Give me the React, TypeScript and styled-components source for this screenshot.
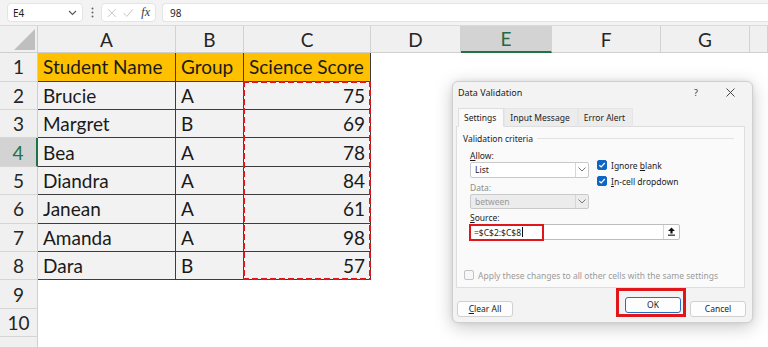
import React from "react";
import styled, { createGlobalStyle } from "styled-components";

const GlobalStyle = createGlobalStyle`
  html, body {
    margin: 0;
    padding: 0;
    background: #fff;
  }
  * {
    box-sizing: border-box;
  }
`;

const UI_FONT = `"Noto Sans", "Open Sans", sans-serif`;
const SHEET_FONT = `Lato, "Noto Sans", sans-serif`;
const RED = "#e0161b";

const Page = styled.div`
  position: relative;
  width: 768px;
  height: 347px;
  overflow: hidden;
  background: #fff;
  font-family: ${SHEET_FONT};
`;

const FormulaBar = styled.div`
  display: flex;
  align-items: center;
  height: 26px;
  padding-left: 7px;
  background: #f3f3f3;
  border-bottom: 1px solid #dadada;
  font-family: ${UI_FONT};
  font-size: 10px;
  color: #222;
`;

const NameBox = styled.div`
  display: flex;
  align-items: center;
  justify-content: space-between;
  width: 76px;
  height: 19px;
  padding: 0 5px 0 5px;
  background: #fff;
  border: 1px solid #e4e4e4;
  border-radius: 4px;
`;

const Dots = styled.div`
  width: 18px;
  display: flex;
  justify-content: center;
`;

const FxBox = styled.div`
  display: flex;
  align-items: center;
  gap: 6px;
  width: 55px;
  height: 19px;
  padding: 0 5px;
  background: #fff;
  border: 1px solid #e4e4e4;
  border-radius: 4px;
`;

const Fx = styled.span`
  font-family: "Liberation Serif", serif;
  font-style: italic;
  font-size: 12px;
  color: #333;
  margin-left: 2px;
`;

const FormulaInput = styled.div`
  flex: 1;
  height: 19px;
  margin-left: 6px;
  padding-left: 7px;
  display: flex;
  align-items: center;
  background: #fff;
  border: 1px solid #e4e4e4;
  border-right: none;
  border-radius: 4px 0 0 4px;
`;

const Sheet = styled.div`
  display: grid;
  grid-template-columns: 38px 138px 68px 127px 90px 91px 109px 89px 1fr;
  grid-template-rows: 27.3px repeat(11, 28.4px);
  font-size: 19px;
`;

const Corner = styled.div`
  grid-row: 1;
  grid-column: 1;
  background: #f0f0f0;
  border-right: 1px solid #cfcfcf;
  border-bottom: 1px solid #cfcfcf;
  display: flex;
  align-items: flex-end;
  justify-content: flex-end;
  padding: 0 2px 2px 0;
`;

const ColHead = styled.div<{ $c: number; $sel?: boolean }>`
  grid-row: 1;
  grid-column: ${(p) => p.$c};
  display: flex;
  align-items: center;
  justify-content: center;
  background: ${(p) => (p.$sel ? "#d3d3d3" : "#f0f0f0")};
  color: ${(p) => (p.$sel ? "#1e6b45" : "#262626")};
  border-right: 1px solid #d2d2d2;
  border-bottom: ${(p) => (p.$sel ? "2px solid #217346" : "1px solid #cfcfcf")};
`;

const RowHead = styled.div<{ $r: number; $sel?: boolean }>`
  grid-row: ${(p) => p.$r};
  grid-column: 1;
  display: flex;
  align-items: center;
  justify-content: center;
  background: ${(p) => (p.$sel ? "#d3d3d3" : "#f0f0f0")};
  color: ${(p) => (p.$sel ? "#217346" : "#262626")};
  border-bottom: 1px solid #d6d6d6;
  border-right: ${(p) => (p.$sel ? "2px solid #217346" : "1px solid #cfcfcf")};
`;

const Cell = styled.div<{ $r: number; $c: number; $head?: boolean; $num?: boolean }>`
  grid-row: ${(p) => p.$r};
  grid-column: ${(p) => p.$c};
  display: flex;
  align-items: center;
  justify-content: ${(p) => (p.$num ? "flex-end" : "flex-start")};
  padding: 0 5px 0 5px;
  background: ${(p) => (p.$head ? "#ffc000" : "#f2f2f2")};
  color: #1a1a1a;
  border-right: 1px solid #3c3c3c;
  border-bottom: 1px solid #3c3c3c;
  white-space: nowrap;
`;

// copy marquee: long red dashes on all four sides
const Marquee = styled.div`
  grid-row: 3 / 10;
  grid-column: 4;
  margin: -1px 0 0 -1px;
  pointer-events: none;
  z-index: 1;
  background:
    repeating-linear-gradient(90deg, ${RED} 0 6px, transparent 6px 9px) top / 100% 2px no-repeat,
    repeating-linear-gradient(90deg, ${RED} 0 6px, transparent 6px 9px) bottom / 100% 2px no-repeat,
    repeating-linear-gradient(180deg, ${RED} 0 6px, transparent 6px 9px) left / 2px 100% no-repeat,
    repeating-linear-gradient(180deg, ${RED} 0 6px, transparent 6px 9px) right / 2px 100% no-repeat;
`;

/* ---------- dialog ---------- */

const Dialog = styled.div`
  position: absolute;
  left: 452px;
  top: 81px;
  width: 301px;
  height: 242px;
  display: flex;
  flex-direction: column;
  background: #f3f3f3;
  border: 1px solid #d0d0d0;
  border-radius: 6px;
  box-shadow: 0 4px 18px rgba(0, 0, 0, 0.22), 0 0 4px rgba(0, 0, 0, 0.08);
  font-family: ${UI_FONT};
  font-size: 8.5px;
  color: #1b1b1b;
  z-index: 2;
`;

const TitleBar = styled.div`
  display: flex;
  align-items: center;
  height: 22px;
  padding: 0 12px 0 5px;
  font-size: 9px;
`;

const Title = styled.div`
  flex: 1;
`;

const TitleButton = styled.div`
  width: 20px;
  display: flex;
  justify-content: center;
  margin-left: 14px;
  color: #333;
`;

const Tabs = styled.div`
  display: flex;
  margin: 5px 0 0 5px;
  height: 18px;
`;

const Tab = styled.div<{ $active?: boolean }>`
  display: flex;
  align-items: center;
  padding: 0 7px 0 5px;
  background: ${(p) => (p.$active ? "#fafafa" : "#ececec")};
  border: 1px solid ${(p) => (p.$active ? "#dedede" : "#e6e6e6")};
  border-bottom: ${(p) => (p.$active ? "1px solid #fafafa" : "1px solid #dedede")};
  margin-bottom: -1px;
  z-index: ${(p) => (p.$active ? 1 : 0)};
`;

const Panel = styled.div`
  display: flex;
  flex-direction: column;
  height: 167px;
  margin: 0 7px 0 3px;
  padding: 5px 6px 6px 6px;
  background: #fafafa;
  border: 1px solid #dedede;
`;

const GroupHead = styled.div`
  display: flex;
  align-items: center;
  gap: 4px;
  height: 14px;
  &::after {
    content: "";
    flex: 1;
    height: 1px;
    background: #e2e2e2;
    margin-right: 4px;
  }
`;

const Criteria = styled.div`
  display: grid;
  grid-template-columns: 119px 1fr;
  grid-template-rows: 14px 16px 16px 15px 15px 16px;
  column-gap: 8px;
  margin: 2px 0 0 7px;
`;

const Label = styled.div<{ $dim?: boolean }>`
  grid-column: 1;
  display: flex;
  align-items: flex-end;
  padding-bottom: 1px;
  color: ${(p) => (p.$dim ? "#8a8a8a" : "#1b1b1b")};
`;

const Combo = styled.div<{ $disabled?: boolean }>`
  grid-column: 1;
  display: flex;
  align-items: center;
  background: ${(p) => (p.$disabled ? "#ececec" : "#fff")};
  color: ${(p) => (p.$disabled ? "#9a9a9a" : "#1b1b1b")};
  border: 1px solid #c9c9c9;
  border-radius: 2px;
`;

const ComboText = styled.div`
  flex: 1;
  padding-left: 4px;
`;

const ComboArrow = styled.div`
  width: 13px;
  height: 100%;
  display: flex;
  align-items: center;
  justify-content: center;
  border-left: 1px solid #d6d6d6;
`;

const Checks = styled.div`
  grid-column: 2;
  grid-row: 2 / 4;
  display: flex;
  flex-direction: column;
  gap: 5px;
  margin-top: -2px;
`;

const CheckRow = styled.div<{ $dim?: boolean }>`
  display: flex;
  align-items: center;
  gap: 4px;
  color: ${(p) => (p.$dim ? "#9a9a9a" : "#1b1b1b")};
`;

const Box = styled.div<{ $on?: boolean }>`
  width: 10px;
  height: 10px;
  border-radius: 2px;
  display: flex;
  align-items: center;
  justify-content: center;
  background: ${(p) => (p.$on ? "#0f65c2" : "#f7f7f7")};
  border: 1px solid ${(p) => (p.$on ? "#0f65c2" : "#c3c3c3")};
`;

const SourceField = styled.div`
  grid-column: 1 / 3;
  width: 210px;
  display: flex;
  align-items: stretch;
  background: #fff;
  border: 1px solid #bdbdbd;
  border-radius: 2px;
`;

const Highlight = styled.div`
  display: flex;
  align-items: center;
  width: 75px;
  margin: -1px 0 -2px -2px;
  padding-left: 3px;
  border: 2.5px solid ${RED};
`;

const Caret = styled.span`
  display: inline-block;
  width: 1px;
  height: 10px;
  background: #111;
  margin-left: 1px;
`;

const Spacer = styled.div`
  flex: 1;
`;

const UploadButton = styled.div`
  width: 16px;
  display: flex;
  align-items: center;
  justify-content: center;
  border-left: 1px solid #d6d6d6;
`;

const ApplyRow = styled(CheckRow)`
  margin: 0 0 0 1px;
`;

const Footer = styled.div`
  display: flex;
  align-items: flex-end;
  padding: 0 6px 5px 4px;
  flex: 1;
`;

const Button = styled.div<{ $default?: boolean }>`
  width: 56px;
  height: 16px;
  display: flex;
  align-items: center;
  justify-content: center;
  background: #fdfdfd;
  border: 1px solid ${(p) => (p.$default ? "#2a6fbf" : "#d0d0d0")};
  border-radius: 3px;
  font-size: 8.5px;
`;

const Annotate = styled.div`
  margin-left: auto;
  margin-right: 4px;
  padding: 6px 2px 1px 6px;
  border: 3px solid ${RED};
`;

const cols = ["A", "B", "C", "D", "E", "F", "G", ""];

const data: [string, string, string | number][] = [
  ["Student Name", "Group", "Science Score"],
  ["Brucie", "A", 75],
  ["Margret", "B", 69],
  ["Bea", "A", 78],
  ["Diandra", "A", 84],
  ["Janean", "A", 61],
  ["Amanda", "A", 98],
  ["Dara", "B", 57],
];

const Chevron = () => (
  <svg width="8" height="5" viewBox="0 0 8 5">
    <path d="M0.5 0.5 L4 4 L7.5 0.5" fill="none" stroke="#777" strokeWidth="1" />
  </svg>
);

const Tick = () => (
  <svg width="8" height="8" viewBox="0 0 8 8">
    <path d="M1.3 4.2 L3.2 6 L6.8 2" fill="none" stroke="#fff" strokeWidth="1.2" />
  </svg>
);

const App = () => {
  return (
    <Page>
      <GlobalStyle />
      <FormulaBar>
        <NameBox>
          <span>E4</span>
          <svg width="9" height="6" viewBox="0 0 9 6">
            <path d="M1 1 L4.5 4.5 L8 1" fill="none" stroke="#555" strokeWidth="1.1" />
          </svg>
        </NameBox>
        <Dots>
          <svg width="3" height="11" viewBox="0 0 3 11">
            <circle cx="1.5" cy="1.5" r="1" fill="#666" />
            <circle cx="1.5" cy="5.5" r="1" fill="#666" />
            <circle cx="1.5" cy="9.5" r="1" fill="#666" />
          </svg>
        </Dots>
        <FxBox>
          <svg width="10" height="10" viewBox="0 0 10 10">
            <path d="M1 1 L9 9 M9 1 L1 9" stroke="#c4c4c4" strokeWidth="1" />
          </svg>
          <svg width="11" height="10" viewBox="0 0 11 10">
            <path d="M0.5 5 L4 8.5 L10.5 1" fill="none" stroke="#c4c4c4" strokeWidth="1" />
          </svg>
          <Fx>fx</Fx>
        </FxBox>
        <FormulaInput>98</FormulaInput>
      </FormulaBar>

      <Sheet>
        <Corner>
          <svg width="21" height="21" viewBox="0 0 21 21">
            <path d="M21 0 L21 21 L0 21 Z" fill="#bfbfbf" />
          </svg>
        </Corner>
        {cols.map((c, i) => (
          <ColHead key={"h" + i} $c={i + 2} $sel={c === "E"}>
            {c}
          </ColHead>
        ))}
        {Array.from({ length: 11 }, (_, i) => (
          <RowHead key={"r" + i} $r={i + 2} $sel={i + 1 === 4}>
            {/* row 11 sits mostly below the window edge */}
            {i < 10 ? i + 1 : null}
          </RowHead>
        ))}
        {data.map((row, r) =>
          row.map((v, c) => (
            <Cell
              key={`${r}-${c}`}
              $r={r + 2}
              $c={c + 2}
              $head={r === 0}
              $num={typeof v === "number"}
            >
              {v}
            </Cell>
          ))
        )}
        <Marquee />
      </Sheet>

      <Dialog>
        <TitleBar>
          <Title>Data Validation</Title>
          <TitleButton>?</TitleButton>
          <TitleButton>
            <svg width="9" height="9" viewBox="0 0 9 9">
              <path d="M0.5 0.5 L8.5 8.5 M8.5 0.5 L0.5 8.5" stroke="#333" strokeWidth="0.9" />
            </svg>
          </TitleButton>
        </TitleBar>
        <Tabs>
          <Tab $active>Settings</Tab>
          <Tab>Input Message</Tab>
          <Tab>Error Alert</Tab>
        </Tabs>
        <Panel>
          <GroupHead>Validation criteria</GroupHead>
          <Criteria>
            <Label>
              <span>
                <u>A</u>llow:
              </span>
            </Label>
            <Combo>
              <ComboText>List</ComboText>
              <ComboArrow>
                <Chevron />
              </ComboArrow>
            </Combo>
            <Checks>
              <CheckRow>
                <Box $on>
                  <Tick />
                </Box>
                <span>
                  Ignore <u>b</u>lank
                </span>
              </CheckRow>
              <CheckRow>
                <Box $on>
                  <Tick />
                </Box>
                <span>
                  <u>I</u>n-cell dropdown
                </span>
              </CheckRow>
            </Checks>
            <Label $dim>Data:</Label>
            <Combo $disabled>
              <ComboText>between</ComboText>
              <ComboArrow>
                <Chevron />
              </ComboArrow>
            </Combo>
            <Label>
              <span>
                <u>S</u>ource:
              </span>
            </Label>
            <SourceField>
              <Highlight>
                =$C$2:$C$8
                <Caret />
              </Highlight>
              <Spacer />
              <UploadButton>
                <svg width="9" height="9" viewBox="0 0 9 9">
                  <path d="M4.5 0.5 L8 4 L5.6 4 L5.6 6.6 L3.4 6.6 L3.4 4 L1 4 Z" fill="#111" />
                  <rect x="1" y="7.6" width="7" height="1.1" fill="#111" />
                </svg>
              </UploadButton>
            </SourceField>
          </Criteria>
          <Spacer />
          <ApplyRow $dim>
            <Box />
            <span>Apply these changes to all other cells with the same settings</span>
          </ApplyRow>
        </Panel>
        <Footer>
          <Button>
            <span>
              <u>C</u>lear All
            </span>
          </Button>
          <Annotate>
            <Button $default>OK</Button>
          </Annotate>
          <Button>Cancel</Button>
        </Footer>
      </Dialog>
    </Page>
  );
};

export default App;
